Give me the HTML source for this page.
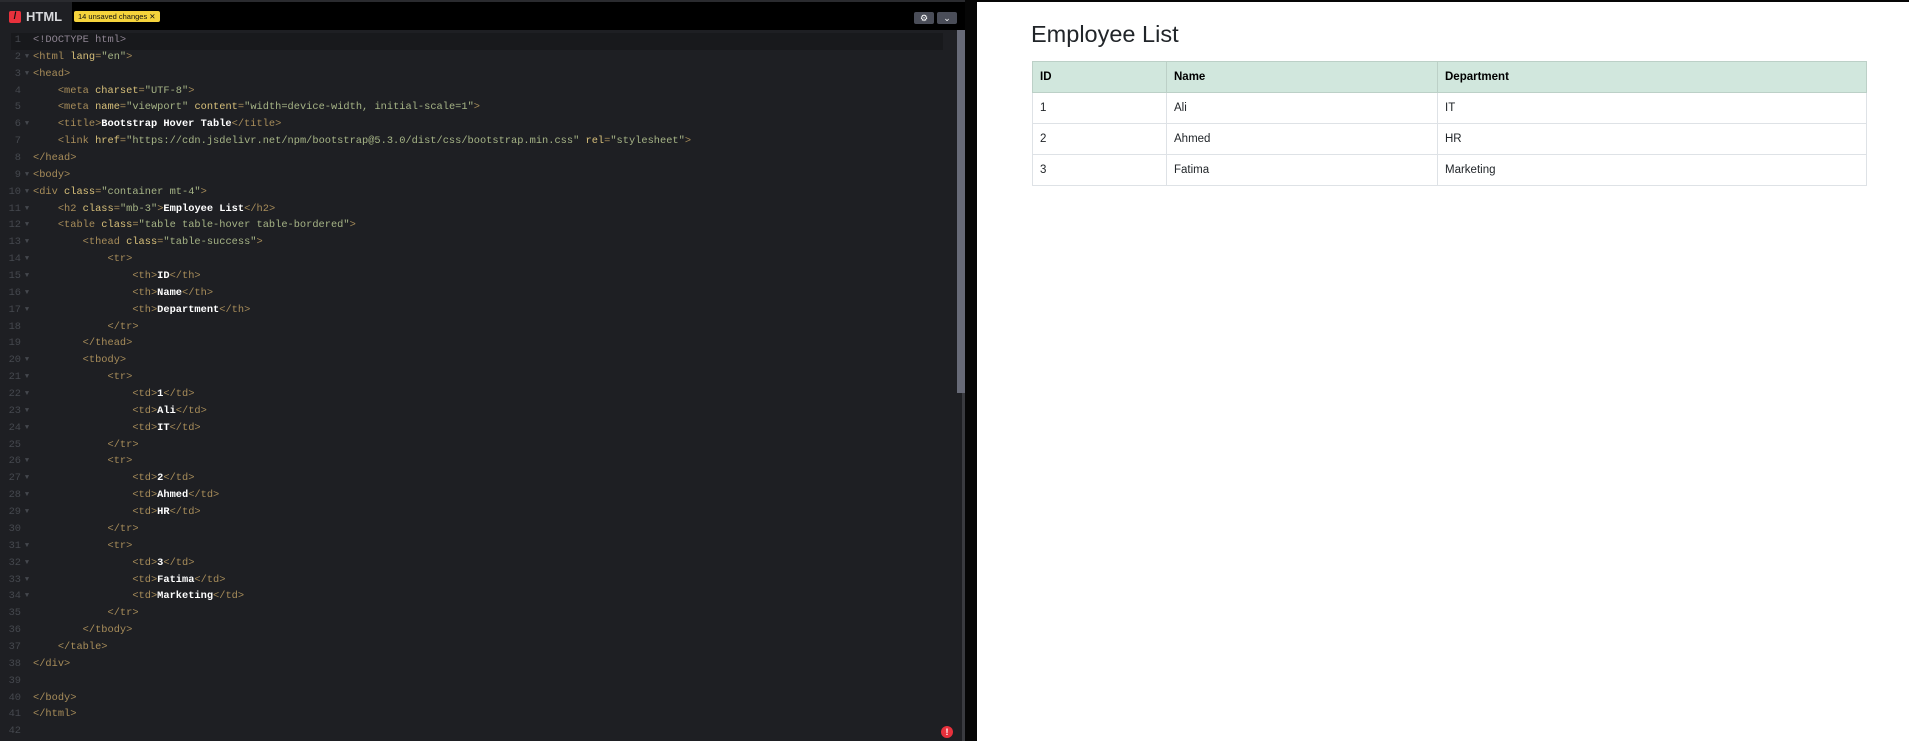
<!DOCTYPE html>
<html><head><meta charset="utf-8"><style>
*{margin:0;padding:0;box-sizing:border-box}
body{width:1909px;height:741px;overflow:hidden;background:#060606;position:relative;font-family:"Liberation Sans",sans-serif}
#ed{position:absolute;left:0;top:0;width:965px;height:741px;background:#1e1f23}
#hdr{position:absolute;left:0;top:0;width:965px;height:30px;background:#000;border-top:2px solid #2a2b2f}
#tab{position:absolute;left:0;top:0;width:72px;height:28px;background:#1e1f23}
#logo{position:absolute;left:9px;top:9px;width:12px;height:12px;background:#e8313c;border-radius:2px;color:#111;font-size:10px;line-height:12px;text-align:center;font-weight:bold}
#tab span.t{position:absolute;left:26px;top:7px;color:#d8d9dc;font-size:13px;font-weight:bold}
#badge{position:absolute;left:74px;top:9px;background:#f5d33c;color:#111;font-size:7.5px;padding:1px 4px;border-radius:2px;height:11px;line-height:9px}
.btn{position:absolute;top:10px;width:20px;height:12px;background:#4a4d58;border-radius:2px;color:#fff;font-size:9px;text-align:center;line-height:12px}
#hl{position:absolute;left:11px;top:33px;width:932px;height:17px;background:#18191c}
#code{position:absolute;left:0;top:32px;font-family:"Liberation Mono",monospace;font-size:10.35px;line-height:16.86px;white-space:pre;color:#a88d5a}
.ln{display:inline-block;width:21px;color:#45484e;text-align:right}
.ar{display:inline-block;width:12px;color:#45484e;font-size:7px;text-align:center;vertical-align:top}
.t{color:#a88d5a}.a{color:#d8c07a}.s{color:#a6b486}.w{color:#fff;font-weight:bold}.d{color:#8f8593}
#sb{position:absolute;left:962px;top:30px;width:3px;height:711px;background:#3a3b40}
#th{position:absolute;left:957px;top:30px;width:8px;height:363px;background:#676a77}
#err{position:absolute;left:941px;top:726px;width:12px;height:12px;border-radius:50%;background:#e8313c;color:#fff;font-size:9px;font-weight:bold;text-align:center;line-height:12px}
#pv{position:absolute;left:977px;top:2px;width:932px;height:739px;background:#fff}
h2{position:absolute;left:1031px;top:21px;font-size:23.5px;font-weight:500;color:#212529}
table{position:absolute;left:1032px;top:61px;width:835px;border-collapse:collapse;font-size:11.5px;color:#212529}
td,th{border:1px solid #dee2e6;height:31px;padding:0 7px;text-align:left}
th{background:#d1e7dd;border-color:#bcd0c7;font-weight:bold;color:#000}
</style></head><body>
<div id="ed">
<div id="hdr"><div id="tab"><div id="logo">/</div><span class="t">HTML</span></div><div id="badge">14 unsaved changes ✕</div>
<div class="btn" style="left:914px">⚙</div><div class="btn" style="left:937px">⌄</div></div>
<div id="hl"></div>
<div id="code"><span class="ln">1</span><span class="ar"></span><span class="d">&lt;!DOCTYPE html&gt;</span>
<span class="ln">2</span><span class="ar">▼</span>&lt;html <span class="a">lang</span>=<span class="s">"en"</span>&gt;
<span class="ln">3</span><span class="ar">▼</span>&lt;head&gt;
<span class="ln">4</span><span class="ar"></span>    &lt;meta <span class="a">charset</span>=<span class="s">"UTF-8"</span>&gt;
<span class="ln">5</span><span class="ar"></span>    &lt;meta <span class="a">name</span>=<span class="s">"viewport"</span> <span class="a">content</span>=<span class="s">"width=device-width, initial-scale=1"</span>&gt;
<span class="ln">6</span><span class="ar">▼</span>    &lt;title&gt;<span class="w">Bootstrap Hover Table</span>&lt;/title&gt;
<span class="ln">7</span><span class="ar"></span>    &lt;link <span class="a">href</span>=<span class="s">"https://cdn.jsdelivr.net/npm/bootstrap@5.3.0/dist/css/bootstrap.min.css"</span> <span class="a">rel</span>=<span class="s">"stylesheet"</span>&gt;
<span class="ln">8</span><span class="ar"></span>&lt;/head&gt;
<span class="ln">9</span><span class="ar">▼</span>&lt;body&gt;
<span class="ln">10</span><span class="ar">▼</span>&lt;div <span class="a">class</span>=<span class="s">"container mt-4"</span>&gt;
<span class="ln">11</span><span class="ar">▼</span>    &lt;h2 <span class="a">class</span>=<span class="s">"mb-3"</span>&gt;<span class="w">Employee List</span>&lt;/h2&gt;
<span class="ln">12</span><span class="ar">▼</span>    &lt;table <span class="a">class</span>=<span class="s">"table table-hover table-bordered"</span>&gt;
<span class="ln">13</span><span class="ar">▼</span>        &lt;thead <span class="a">class</span>=<span class="s">"table-success"</span>&gt;
<span class="ln">14</span><span class="ar">▼</span>            &lt;tr&gt;
<span class="ln">15</span><span class="ar">▼</span>                &lt;th&gt;<span class="w">ID</span>&lt;/th&gt;
<span class="ln">16</span><span class="ar">▼</span>                &lt;th&gt;<span class="w">Name</span>&lt;/th&gt;
<span class="ln">17</span><span class="ar">▼</span>                &lt;th&gt;<span class="w">Department</span>&lt;/th&gt;
<span class="ln">18</span><span class="ar"></span>            &lt;/tr&gt;
<span class="ln">19</span><span class="ar"></span>        &lt;/thead&gt;
<span class="ln">20</span><span class="ar">▼</span>        &lt;tbody&gt;
<span class="ln">21</span><span class="ar">▼</span>            &lt;tr&gt;
<span class="ln">22</span><span class="ar">▼</span>                &lt;td&gt;<span class="w">1</span>&lt;/td&gt;
<span class="ln">23</span><span class="ar">▼</span>                &lt;td&gt;<span class="w">Ali</span>&lt;/td&gt;
<span class="ln">24</span><span class="ar">▼</span>                &lt;td&gt;<span class="w">IT</span>&lt;/td&gt;
<span class="ln">25</span><span class="ar"></span>            &lt;/tr&gt;
<span class="ln">26</span><span class="ar">▼</span>            &lt;tr&gt;
<span class="ln">27</span><span class="ar">▼</span>                &lt;td&gt;<span class="w">2</span>&lt;/td&gt;
<span class="ln">28</span><span class="ar">▼</span>                &lt;td&gt;<span class="w">Ahmed</span>&lt;/td&gt;
<span class="ln">29</span><span class="ar">▼</span>                &lt;td&gt;<span class="w">HR</span>&lt;/td&gt;
<span class="ln">30</span><span class="ar"></span>            &lt;/tr&gt;
<span class="ln">31</span><span class="ar">▼</span>            &lt;tr&gt;
<span class="ln">32</span><span class="ar">▼</span>                &lt;td&gt;<span class="w">3</span>&lt;/td&gt;
<span class="ln">33</span><span class="ar">▼</span>                &lt;td&gt;<span class="w">Fatima</span>&lt;/td&gt;
<span class="ln">34</span><span class="ar">▼</span>                &lt;td&gt;<span class="w">Marketing</span>&lt;/td&gt;
<span class="ln">35</span><span class="ar"></span>            &lt;/tr&gt;
<span class="ln">36</span><span class="ar"></span>        &lt;/tbody&gt;
<span class="ln">37</span><span class="ar"></span>    &lt;/table&gt;
<span class="ln">38</span><span class="ar"></span>&lt;/div&gt;
<span class="ln">39</span><span class="ar"></span>
<span class="ln">40</span><span class="ar"></span>&lt;/body&gt;
<span class="ln">41</span><span class="ar"></span>&lt;/html&gt;
<span class="ln">42</span></div>
<div id="sb"></div><div id="th"></div>
<div id="err">!</div>
</div>
<div id="pv"></div>
<h2>Employee List</h2>
<table>
<tr><th style="width:134px">ID</th><th style="width:271px">Name</th><th>Department</th></tr>
<tr><td>1</td><td>Ali</td><td>IT</td></tr>
<tr><td>2</td><td>Ahmed</td><td>HR</td></tr>
<tr><td>3</td><td>Fatima</td><td>Marketing</td></tr>
</table>
</body></html>
